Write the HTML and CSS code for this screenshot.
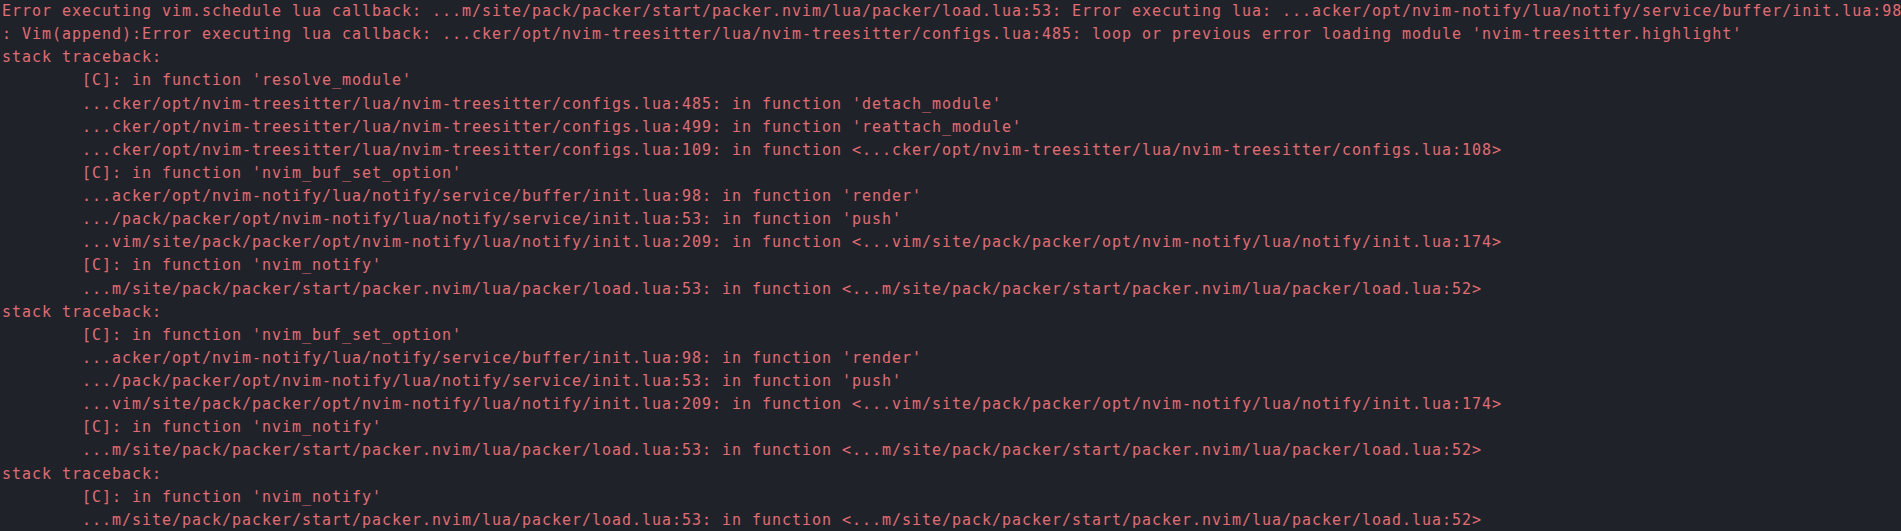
FILE: index.html
```html
<!DOCTYPE html>
<html>
<head>
<meta charset="utf-8">
<link rel="stylesheet" href="styles.css">
</head>
<body>
<div class="term">
<div class="line">Error executing vim.schedule lua callback: ...m/site/pack/packer/start/packer.nvim/lua/packer/load.lua:53: Error executing lua: ...acker/opt/nvim-notify/lua/notify/service/buffer/init.lua:98</div>
<div class="line">: Vim(append):Error executing lua callback: ...cker/opt/nvim-treesitter/lua/nvim-treesitter/configs.lua:485: loop or previous error loading module 'nvim-treesitter.highlight'</div>
<div class="line">stack traceback:</div>
<div class="line ind">[C]: in function 'resolve_module'</div>
<div class="line ind">...cker/opt/nvim-treesitter/lua/nvim-treesitter/configs.lua:485: in function 'detach_module'</div>
<div class="line ind">...cker/opt/nvim-treesitter/lua/nvim-treesitter/configs.lua:499: in function 'reattach_module'</div>
<div class="line ind">...cker/opt/nvim-treesitter/lua/nvim-treesitter/configs.lua:109: in function &lt;...cker/opt/nvim-treesitter/lua/nvim-treesitter/configs.lua:108&gt;</div>
<div class="line ind">[C]: in function 'nvim_buf_set_option'</div>
<div class="line ind">...acker/opt/nvim-notify/lua/notify/service/buffer/init.lua:98: in function 'render'</div>
<div class="line ind">.../pack/packer/opt/nvim-notify/lua/notify/service/init.lua:53: in function 'push'</div>
<div class="line ind">...vim/site/pack/packer/opt/nvim-notify/lua/notify/init.lua:209: in function &lt;...vim/site/pack/packer/opt/nvim-notify/lua/notify/init.lua:174&gt;</div>
<div class="line ind">[C]: in function 'nvim_notify'</div>
<div class="line ind">...m/site/pack/packer/start/packer.nvim/lua/packer/load.lua:53: in function &lt;...m/site/pack/packer/start/packer.nvim/lua/packer/load.lua:52&gt;</div>
<div class="line">stack traceback:</div>
<div class="line ind">[C]: in function 'nvim_buf_set_option'</div>
<div class="line ind">...acker/opt/nvim-notify/lua/notify/service/buffer/init.lua:98: in function 'render'</div>
<div class="line ind">.../pack/packer/opt/nvim-notify/lua/notify/service/init.lua:53: in function 'push'</div>
<div class="line ind">...vim/site/pack/packer/opt/nvim-notify/lua/notify/init.lua:209: in function &lt;...vim/site/pack/packer/opt/nvim-notify/lua/notify/init.lua:174&gt;</div>
<div class="line ind">[C]: in function 'nvim_notify'</div>
<div class="line ind">...m/site/pack/packer/start/packer.nvim/lua/packer/load.lua:53: in function &lt;...m/site/pack/packer/start/packer.nvim/lua/packer/load.lua:52&gt;</div>
<div class="line">stack traceback:</div>
<div class="line ind">[C]: in function 'nvim_notify'</div>
<div class="line ind">...m/site/pack/packer/start/packer.nvim/lua/packer/load.lua:53: in function &lt;...m/site/pack/packer/start/packer.nvim/lua/packer/load.lua:52&gt;</div>
</div>
</body>
</html>
```

FILE: styles.css
```css
html, body {
  margin: 0;
  padding: 0;
  background: #1f2229;
  overflow: hidden;
}

.term {
  width: 1901px;
  height: 531px;
  padding: 0 0 0 2px;
  box-sizing: border-box;
  background: #1f2229;
  color: #e06c75;
  font-family: "DejaVu Sans Mono", "Liberation Mono", monospace;
  font-size: 15px;
  letter-spacing: 0.97px;
  line-height: 23.14px;
  display: flex;
  flex-direction: column;
  overflow: hidden;
}

.line {
  white-space: pre;
  height: 23.14px;
}

.ind {
  padding-left: 80px;
}
```
